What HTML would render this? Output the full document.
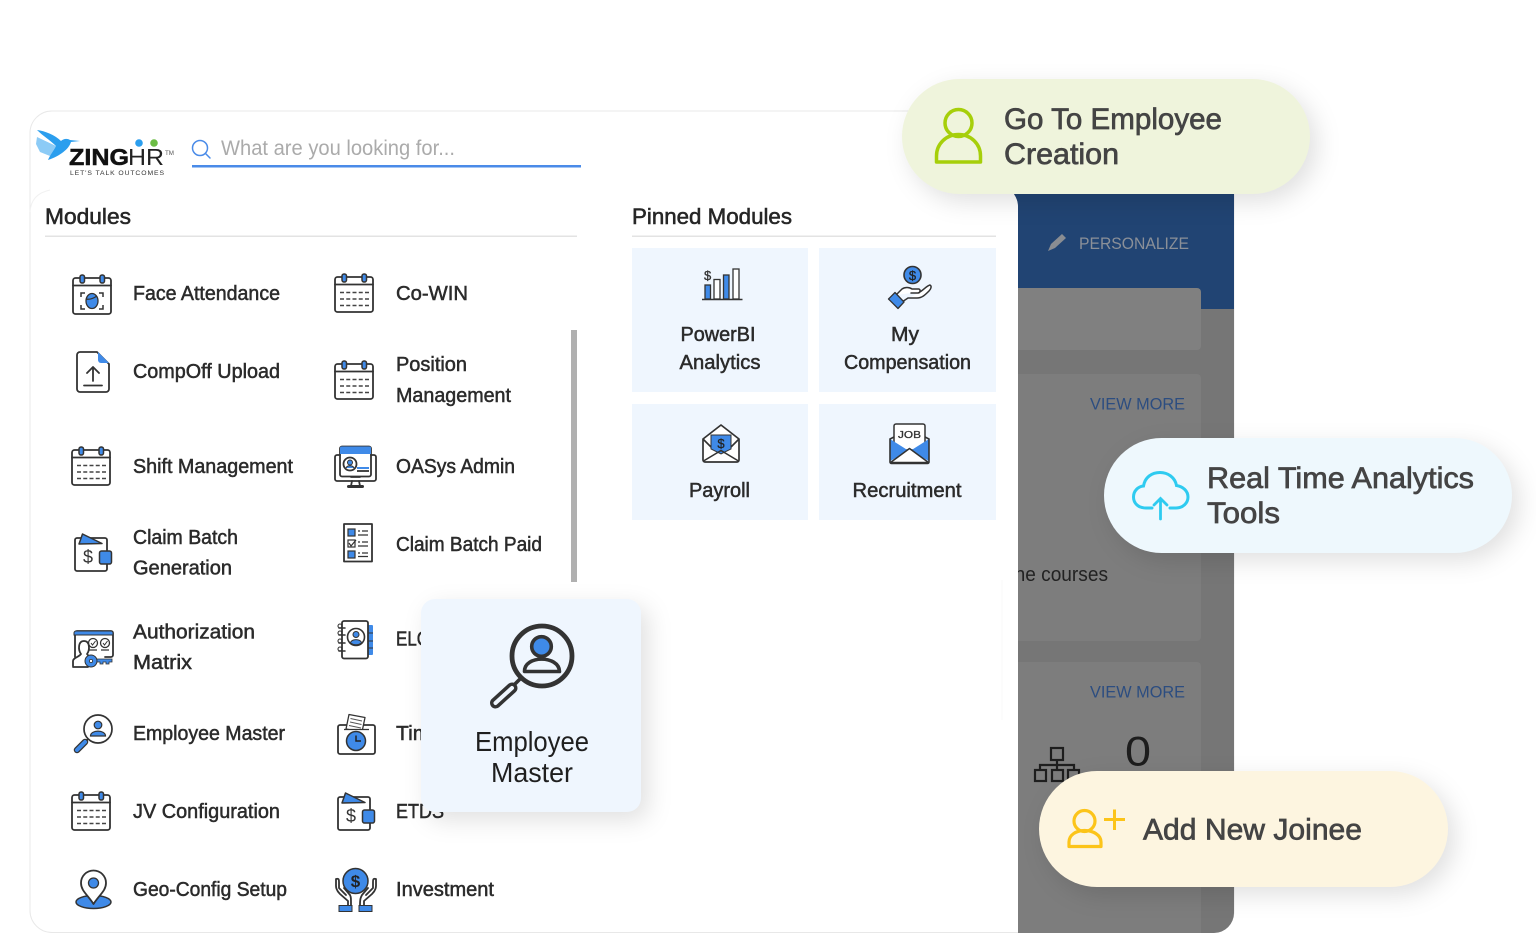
<!DOCTYPE html>
<html lang="en">
<head>
<meta charset="utf-8">
<title>ZingHR Modules</title>
<style>
html,body{margin:0;padding:0;background:#fff;width:1536px;height:933px;overflow:hidden}
svg{display:block}
text{font-family:"Liberation Sans",sans-serif}
.t{font-size:20px;fill:#2b2b2b;stroke:#2b2b2b;stroke-width:.5px}
.h{font-size:22px;fill:#262626;stroke:#262626;stroke-width:.55px}
.p{font-size:30px;fill:#444;stroke:#444;stroke-width:.7px}
.c{font-size:20px;fill:#2b2b2b;stroke:#2b2b2b;stroke-width:.5px}
.i{fill:none;stroke:#333;stroke-width:1.8;stroke-linecap:round;stroke-linejoin:round}
.b{fill:#3f8ae8}
.shadow{filter:drop-shadow(7px 8px 12px rgba(0,0,0,.12))}
</style>
</head>
<body>
<svg width="1536" height="933" viewBox="0 0 1536 933" xmlns="http://www.w3.org/2000/svg">
<defs>
<clipPath id="pn"><path d="M1014 194H1234V913a20 20 0 0 1-20 20H1018V206Q1018 200 1014 194Z"/></clipPath>
<g id="cal">
  <rect x="1" y="4" width="38" height="35" rx="2.500" class="i" fill="#fff"/>
  <path d="M1 11.500H39" class="i"/>
  <rect x="8" y="1" width="4.500" height="8" rx="2" class="b" stroke="#333" stroke-width="1.500"/>
  <rect x="28" y="1" width="4.500" height="8" rx="2" class="b" stroke="#333" stroke-width="1.500"/>
  <path d="M6 19.500H35M6 26H35M6 32.500H35" fill="none" stroke="#444" stroke-width="1.600" stroke-dasharray="4 2.250"/>
</g>
<g id="wal">
  <path d="M33 18V8a2 2 0 0 0-2-2H3a2 2 0 0 0-2 2V37a2 2 0 0 0 2 2H31a2 2 0 0 0 2-2V32" class="i"/>
  <path d="M5 12 8.500 2 28 11.500Z" class="b" stroke="#333" stroke-width="1.500" stroke-linejoin="round"/>
  <rect x="25.500" y="19" width="12" height="13" rx="2" class="b" stroke="#333" stroke-width="1.500"/>
  <text x="14" y="31" text-anchor="middle" font-size="18" fill="#333">$</text>
</g>
</defs>

<!-- outer card -->
<rect x="30" y="111" width="1204" height="821.500" rx="22" fill="#fff" stroke="#e8e8e8"/>
<path d="M30 212Q31 194 50 190" fill="none" stroke="#f1f1f1" stroke-width="1"/>

<!-- right dim panel -->
<g clip-path="url(#pn)">
  <rect x="1010" y="190" width="230" height="750" fill="#767676"/>
  <rect x="1010" y="190" width="230" height="119" fill="#214473"/>
  <rect x="1000" y="288" width="201" height="62" rx="4" fill="#808080"/>
  <rect x="1000" y="374" width="201" height="267" rx="4" fill="#7d7d7d"/>
  <rect x="1000" y="662" width="201" height="280" rx="4" fill="#7d7d7d"/>
  <path d="M1048 251l3-7 11-10 4 4-11 10Z" fill="#8a8d92"/>
  <text x="1079" y="249" font-size="17" fill="#8b9098" textLength="110" lengthAdjust="spacingAndGlyphs">PERSONALIZE</text>
  <text x="1090" y="409.500" font-size="17" fill="#2c4d80" textLength="95" lengthAdjust="spacingAndGlyphs">VIEW MORE</text>
  <text x="1090" y="697.500" font-size="17" fill="#2c4d80" textLength="95" lengthAdjust="spacingAndGlyphs">VIEW MORE</text>
  <text x="1004" y="581" font-size="20" fill="#222" textLength="104" lengthAdjust="spacingAndGlyphs">one courses</text>
  <text x="1125" y="765.500" font-size="42" fill="#1d1d1d" textLength="26" lengthAdjust="spacingAndGlyphs">0</text>
  <g fill="none" stroke="#1e1e1e" stroke-width="2.200">
    <rect x="1051" y="748" width="12" height="12"/>
    <rect x="1035" y="770" width="11" height="11"/>
    <rect x="1052" y="770" width="11" height="11"/>
    <rect x="1068" y="770" width="11" height="11"/>
    <path d="M1057 760V770M1040 770V765H1074V770"/>
  </g>
</g>

<path d="M1002 580V720" stroke="#f8f8f8" stroke-width="1"/>

<!-- logo -->
<path d="M37 137L56 146L50 156L40 152L36 144Z" fill="#8ccbf6"/>
<path d="M37 130C45 131 55 135 61 141C63 139 67 138 70 140L80 141L71 142C69 149 60 156 48 160C50 155 54 150 56 146C50 140 43 136 37 130Z" fill="#2b9eee"/>
<circle cx="139" cy="143" r="3.800" fill="#2b9eee"/>
<circle cx="154" cy="143" r="3.800" fill="#6cbd45"/>
<text x="69" y="165" font-size="23" font-weight="700" fill="#111" stroke="#111" stroke-width=".5" textLength="60" lengthAdjust="spacingAndGlyphs">ZING</text>
<text x="128" y="165" font-size="23" fill="#222" textLength="36" lengthAdjust="spacingAndGlyphs">HR</text>
<text x="165" y="155" font-size="6.500" fill="#555" textLength="9" lengthAdjust="spacingAndGlyphs">TM</text>
<text x="70" y="175" font-size="6.800" fill="#333" textLength="94" lengthAdjust="spacing">LET'S TALK OUTCOMES</text>

<!-- search -->
<circle cx="200" cy="148" r="7.500" fill="none" stroke="#4a8be8" stroke-width="1.500"/>
<path d="M205.500 153.500 210 158" stroke="#4a8be8" stroke-width="1.500" stroke-linecap="round"/>
<text x="221" y="155" font-size="21" fill="#ababab" textLength="234" lengthAdjust="spacingAndGlyphs">What are you looking for...</text>
<rect x="192" y="165" width="389" height="2.500" fill="#4a8be8"/>

<!-- headers -->
<text class="h" x="45" y="224" textLength="86" lengthAdjust="spacingAndGlyphs">Modules</text>
<rect x="45" y="235.500" width="532" height="1.500" fill="#e3e3e3"/>
<text class="h" x="632" y="224" textLength="160" lengthAdjust="spacingAndGlyphs">Pinned Modules</text>
<rect x="632" y="235.500" width="364" height="1.500" fill="#e3e3e3"/>

<!-- scrollbar -->
<rect x="571" y="330" width="6" height="252" fill="#b0b0b0"/>

<!-- left labels -->
<text class="t" x="133" y="300" textLength="147" lengthAdjust="spacingAndGlyphs">Face Attendance</text>
<text class="t" x="133" y="378" textLength="147" lengthAdjust="spacingAndGlyphs">CompOff Upload</text>
<text class="t" x="133" y="473" textLength="160" lengthAdjust="spacingAndGlyphs">Shift Management</text>
<text class="t" x="133" y="544" textLength="105" lengthAdjust="spacingAndGlyphs">Claim Batch</text>
<text class="t" x="133" y="574.500" textLength="99" lengthAdjust="spacingAndGlyphs">Generation</text>
<text class="t" x="133" y="638.500" textLength="122" lengthAdjust="spacingAndGlyphs">Authorization</text>
<text class="t" x="133" y="669" textLength="59" lengthAdjust="spacingAndGlyphs">Matrix</text>
<text class="t" x="133" y="740" textLength="152" lengthAdjust="spacingAndGlyphs">Employee Master</text>
<text class="t" x="133" y="818" textLength="147" lengthAdjust="spacingAndGlyphs">JV Configuration</text>
<text class="t" x="133" y="896" textLength="154" lengthAdjust="spacingAndGlyphs">Geo-Config Setup</text>

<!-- right labels -->
<text class="t" x="396" y="300" textLength="72" lengthAdjust="spacingAndGlyphs">Co-WIN</text>
<text class="t" x="396" y="371" textLength="71" lengthAdjust="spacingAndGlyphs">Position</text>
<text class="t" x="396" y="402" textLength="115" lengthAdjust="spacingAndGlyphs">Management</text>
<text class="t" x="396" y="473" textLength="119" lengthAdjust="spacingAndGlyphs">OASys Admin</text>
<text class="t" x="396" y="551" textLength="146" lengthAdjust="spacingAndGlyphs">Claim Batch Paid</text>
<text class="t" x="396" y="645.500" textLength="33" lengthAdjust="spacingAndGlyphs">ELC</text>
<text class="t" x="396" y="740" textLength="46" lengthAdjust="spacingAndGlyphs">Time</text>
<text class="t" x="396" y="818" textLength="48" lengthAdjust="spacingAndGlyphs">ETDS</text>
<text class="t" x="396" y="896" textLength="98" lengthAdjust="spacingAndGlyphs">Investment</text>

<!-- Face attendance -->
<g>
  <rect x="73" y="278" width="38" height="36" rx="2.500" class="i" fill="#fff"/>
  <path d="M73 285.500H111" class="i"/>
  <rect x="80" y="275" width="4.500" height="8" rx="2" class="b" stroke="#333" stroke-width="1.500"/>
  <rect x="100" y="275" width="4.500" height="8" rx="2" class="b" stroke="#333" stroke-width="1.500"/>
  <path d="M81 297V293H85M99 293H103V297M81 305V309H85M99 309H103V305" fill="none" stroke="#333" stroke-width="1.500"/>
  <ellipse cx="92" cy="301" rx="6" ry="7.500" class="b" stroke="#333" stroke-width="1.300"/>
  <path d="M86 299C90 300 94 298 97 296" fill="none" stroke="#333" stroke-width="1.300"/>
</g>

<!-- CompOff -->
<path d="M80 352H97L109 364V389a3 3 0 0 1-3 3H80a3 3 0 0 1-3-3V355a3 3 0 0 1 3-3Z" class="i" fill="#fff"/>
<path d="M98 352 109 363H101a3 3 0 0 1-3-3Z" class="b"/>
<path d="M93 381V367M87 373 93 367 99 373M84 385.500H102" class="i"/>

<!-- calendars -->
<use href="#cal" x="334" y="273"/>
<use href="#cal" x="334" y="360"/>
<use href="#cal" x="71" y="446"/>
<use href="#cal" x="71" y="791"/>

<!-- OASys -->
<g transform="translate(334 445)">
  <path d="M6 10H3a2 2 0 0 0-2 2V34a2 2 0 0 0 2 2H40a2 2 0 0 0 2-2V12a2 2 0 0 0-2-2H37" class="i"/>
  <rect x="6" y="1.500" width="31" height="30" rx="2" class="i" fill="#fff"/>
  <path d="M6 3a1.500 1.500 0 0 1 1.500-1.500H35.500A1.500 1.500 0 0 1 37 3V9H6Z" class="b"/>
  <circle cx="16" cy="19" r="6.500" class="i" fill="#fff"/>
  <circle cx="16" cy="17.500" r="2.500" fill="#3f8ae8" stroke="#333"/>
  <path d="M12 23C13 20 19 20 20 23" class="b" stroke="#333"/>
  <path d="M23 23H35" stroke="#3f8ae8" stroke-width="2"/><path d="M23 26H35" stroke="#333" stroke-width="1.800"/>
  <path d="M17 32H26M18 36 17 41M25 36 26 41" class="i"/>
  <rect x="13" y="40" width="17" height="3" rx="1.500" fill="#333"/>
</g>

<!-- wallets -->
<use href="#wal" x="74" y="532"/>
<use href="#wal" x="337" y="791"/>

<!-- checklist -->
<g transform="translate(343 523)">
  <rect x="1" y="1" width="28" height="37.500" class="i" fill="#fff" stroke-width="1.600"/>
  <rect x="5" y="6" width="7" height="7" class="b" stroke="#333" stroke-width="1.200"/>
  <rect x="5" y="17" width="7" height="7" fill="#fff" stroke="#333" stroke-width="1.200"/>
  <path d="M6 20 8 23 13 17" fill="none" stroke="#333" stroke-width="1.200"/>
  <rect x="5" y="28" width="7" height="7" class="b" stroke="#333" stroke-width="1.200"/>
  <path d="M15 8H17M19 8H25M15 12H25M15 19H17M19 19H25M15 23H25M15 30H17M19 30H25M15 33.500H25" stroke="#333" stroke-width="1.200"/>
</g>

<!-- Auth matrix -->
<g transform="translate(72 630)">
  <path d="M3 27V3a2 2 0 0 1 2-2H39a2 2 0 0 1 2 2V25a2 2 0 0 1-2 2H33" class="i"/>
  <path d="M2 5V3a2 2 0 0 1 2-2H39a2 2 0 0 1 2 2V5Z" class="b" stroke="#333" stroke-width="1"/>
  <path d="M1 36V31C1 28 7 27 9 24C6 20 6 11 12 11C18 11 18 20 15 24C16 26 18 26 19 27" class="i" stroke-width="1.400" fill="#fff"/>
  <path d="M1 37H16" class="i" stroke-width="1.400"/>
  <circle cx="21" cy="13" r="4.500" fill="none" stroke="#333" stroke-width="1.300"/>
  <circle cx="33" cy="13" r="4.500" fill="none" stroke="#333" stroke-width="1.300"/>
  <path d="M19 13 20.500 15 23.500 11M31 13 32.500 15 35.500 11" fill="none" stroke="#333" stroke-width="1"/>
  <path d="M17 20H25M29 20H37" stroke="#333" stroke-width="1.300"/>
  <circle cx="19" cy="31" r="6" class="b" stroke="#333" stroke-width="1"/>
  <circle cx="19" cy="31" r="1.600" fill="#fff" stroke="#333" stroke-width=".8"/>
  <path d="M25 29H40V32H37V34H34V32H31V34H28V32H25Z" class="b" stroke="#333" stroke-width=".8"/>
</g>

<!-- ELC notebook -->
<g transform="translate(338 620)">
  <path d="M30 5H34a1 1 0 0 1 1 1V34a1 1 0 0 1-1 1H30Z" class="b"/>
  <path d="M30 13H35M30 21H35M30 28H35" stroke="#333" stroke-width="1"/>
  <rect x="4" y="1" width="26" height="37.500" rx="2" class="i" fill="#fff" stroke-width="1.500"/>
  <path d="M1 8H7M1 15H7M1 23H7M1 31H7" stroke="#333" stroke-width="1.500" stroke-linecap="round"/>
  <circle cx="2" cy="6" r="2" fill="none" stroke="#333" stroke-width="1.100"/><circle cx="2" cy="13" r="2" fill="none" stroke="#333" stroke-width="1.100"/><circle cx="2" cy="21" r="2" fill="none" stroke="#333" stroke-width="1.100"/><circle cx="2" cy="29" r="2" fill="none" stroke="#333" stroke-width="1.100"/>
  <circle cx="18" cy="17" r="8.500" fill="none" stroke="#333" stroke-width="1.600"/>
  <circle cx="18" cy="14.500" r="3" class="b" stroke="#333" stroke-width="1"/>
  <path d="M12.500 23C13 18.500 23 18.500 23.500 23Q18 26.500 12.500 23Z" class="b" stroke="#333" stroke-width="1"/>
</g>

<!-- Employee master small -->
<g>
  <circle cx="98" cy="729" r="14" fill="#fff" stroke="#333" stroke-width="1.700"/>
  <circle cx="98" cy="725" r="3.800" class="b" stroke="#333" stroke-width="1.200"/>
  <path d="M90.500 736C90.500 729.500 105.500 729.500 105.500 736Z" class="b" stroke="#333" stroke-width="1.200"/>
  <path d="M88 739 84 743" stroke="#333" stroke-width="1.800"/>
  <path d="M85 742 77 750" stroke="#333" stroke-width="6.500" stroke-linecap="round"/>
  <path d="M85 742 77 750" stroke="#3f8ae8" stroke-width="4" stroke-linecap="round"/>
</g>

<!-- Time -->
<g transform="translate(337 713)">
  <rect x="1" y="12" width="37" height="29" rx="2" class="i" fill="#fff" stroke-width="1.500"/>
  <path d="M12 1.500 28 4.500 25 19 9 16Z" fill="#fff" stroke="#333" stroke-width="1.300" stroke-linejoin="round"/>
  <path d="M13.500 5.500 25 8M13 9 24.500 11.500M12 12.500 24 15" stroke="#555" stroke-width="1"/>
  <rect x="2" y="17" width="35" height="3" fill="#fff"/>
  <path d="M7 16.500H32" stroke="#333" stroke-width="1.300"/>
  <circle cx="19" cy="28" r="9.500" class="b" stroke="#333" stroke-width="1.500"/>
  <path d="M19 22.500V28H24" fill="none" stroke="#222" stroke-width="1.500"/>
</g>

<!-- Geo -->
<g transform="translate(76 870)">
  <ellipse cx="17.500" cy="32" rx="17.500" ry="6.500" class="b" stroke="#333" stroke-width="1.500"/>
  <path d="M17.500 34C12 25 5 21 5 13a12.500 12.500 0 0 1 25 0C30 21 23 25 17.500 34Z" fill="#fff" stroke="#333" stroke-width="1.800" stroke-linejoin="round"/>
  <circle cx="17.500" cy="13" r="5" class="b" stroke="#333" stroke-width="1.300"/>
</g>

<!-- Investment -->
<g transform="translate(334 868)">
  <circle cx="21.500" cy="13" r="12.500" class="b" stroke="#333" stroke-width="1.500"/>
  <text x="21.500" y="19" text-anchor="middle" font-size="17" font-weight="700" fill="#222">$</text>
  <path d="M14 37V33L6 26C3 23 2 21 2 18V11C5 10 5 12 5 14V20L12 27M10 20 16 27C17 29 17 30 17 37" class="i" stroke-width="1.500"/>
  <path d="M30 37V33L38 26C41 23 42 21 42 18V11C39 10 39 12 39 14V20L32 27M34 20 28 27C27 29 26 30 26 37" class="i" stroke-width="1.500"/>
  <rect x="5" y="37.500" width="13" height="6" class="b" stroke="#333" stroke-width="1"/>
  <rect x="25" y="37.500" width="13" height="6" class="b" stroke="#333" stroke-width="1"/>
</g>

<!-- pinned -->
<g fill="#eff6fe">
  <rect x="632" y="248" width="176" height="144"/>
  <rect x="819" y="248" width="177" height="144"/>
  <rect x="632" y="404" width="176" height="116"/>
  <rect x="819" y="404" width="177" height="116"/>
</g>
<text class="c" x="680.500" y="341" textLength="75" lengthAdjust="spacingAndGlyphs">PowerBI</text>
<text class="c" x="679.500" y="369" textLength="81" lengthAdjust="spacingAndGlyphs">Analytics</text>
<text class="c" x="891" y="341" textLength="28" lengthAdjust="spacingAndGlyphs">My</text>
<text class="c" x="844" y="369" textLength="127" lengthAdjust="spacingAndGlyphs">Compensation</text>
<text class="c" x="689" y="497" textLength="61" lengthAdjust="spacingAndGlyphs">Payroll</text>
<text class="c" x="852.500" y="497" textLength="109" lengthAdjust="spacingAndGlyphs">Recruitment</text>

<!-- powerBI icon -->
<g transform="translate(702 268)">
  <text x="2" y="12" font-size="13" fill="#333" stroke="#333" stroke-width=".3">$</text>
  <rect x="3" y="17" width="5.500" height="14" class="b" stroke="#333" stroke-width="1.300"/>
  <rect x="12" y="11.500" width="6" height="19.500" fill="#fff" stroke="#333" stroke-width="1.300"/>
  <rect x="21.500" y="7" width="5.500" height="24" class="b" stroke="#333" stroke-width="1.300"/>
  <rect x="31" y="1" width="6" height="30" fill="#fff" stroke="#333" stroke-width="1.300"/>
  <path d="M0 31.500H40.500" stroke="#333" stroke-width="1.600"/>
</g>
<!-- compensation icon -->
<g>
  <circle cx="912.500" cy="275" r="8.500" class="b" stroke="#333" stroke-width="1.600"/>
  <text x="912.500" y="280" text-anchor="middle" font-size="13" fill="#222" stroke="#222" stroke-width=".3">$</text>
  <path d="M896 295 902 289C905 287 909 287 912 289H919C921 290 920 293 918 293H911M918 293C923 291 926 286 930 285C932 286 931 289 929 291C925 295 922 298 917 298H908L902 302" fill="#fff" stroke="#333" stroke-width="1.500" stroke-linejoin="round" stroke-linecap="round"/>
  <path d="M888.500 299 895 292.500 904 302 898 308.500Z" class="b" stroke="#333" stroke-width="1.300" stroke-linejoin="round"/>
</g>
<!-- payroll icon -->
<g transform="translate(702 424)">
  <path d="M1 15 19 1 37 15V36a2 2 0 0 1-2 2H3a2 2 0 0 1-2-2Z" fill="#fff" stroke="#333" stroke-width="1.700" stroke-linejoin="round"/>
  <path d="M9 11H29V25L19 30 9 25Z" class="b" stroke="#333" stroke-width="1"/>
  <text x="19" y="24" text-anchor="middle" font-size="13" fill="#222" stroke="#222" stroke-width=".3">$</text>
  <path d="M1 15 9 23M37 15 29 23M1.500 37 19 26.500 36.500 37" fill="none" stroke="#333" stroke-width="1.600"/>
</g>
<!-- JOB icon -->
<g transform="translate(889 423)">
  <rect x="5" y="1" width="31" height="26" rx="2" fill="#fff" stroke="#333" stroke-width="1.500"/>
  <text x="20.500" y="15" text-anchor="middle" font-size="10.500" fill="#333" stroke="#333" stroke-width=".3" textLength="23" lengthAdjust="spacingAndGlyphs">JOB</text>
  <path d="M1 16 20 28 1 38Z" class="b"/>
  <path d="M40 16 21 28 40 38Z" class="b"/>
  <path d="M5 14 1 16V39a1.500 1.500 0 0 0 1.500 1.500H38.500A1.500 1.500 0 0 0 40 39V16L36 14" fill="none" stroke="#333" stroke-width="1.600"/>
  <path d="M1.500 39.500 20.500 25.500 39.500 39.500Z" fill="#fff" stroke="#333" stroke-width="1.500" stroke-linejoin="round"/>
</g>

<!-- Employee Master highlight -->
<g class="shadow"><rect x="421" y="599" width="220" height="213" rx="14" fill="#eff6fe"/></g>
<circle cx="542" cy="656" r="30" fill="none" stroke="#333" stroke-width="4.800"/>
<circle cx="541.500" cy="646.500" r="9.800" class="b" stroke="#333" stroke-width="3.600"/>
<path d="M524.500 671.500C524 655 559 655 559.500 671.500Z" fill="#eff6fe" stroke="#333" stroke-width="3.600" stroke-linejoin="round"/>
<path d="M521 678 513 686" stroke="#333" stroke-width="3.600"/>
<path d="M512 688 495.500 703" stroke="#333" stroke-width="11" stroke-linecap="round"/>
<path d="M512 688 495.500 703" stroke="#eff6fe" stroke-width="4" stroke-linecap="round"/>
<text x="475" y="751" font-size="28" fill="#1f1f1f" textLength="114" lengthAdjust="spacingAndGlyphs">Employee</text>
<text x="491" y="782" font-size="28" fill="#1f1f1f" textLength="82" lengthAdjust="spacingAndGlyphs">Master</text>

<!-- green pill -->
<g class="shadow"><rect x="902" y="79" width="408" height="115" rx="57.500" fill="#eff4dc"/></g>
<circle cx="958.500" cy="123" r="13.500" fill="none" stroke="#a6cf0a" stroke-width="3.500"/>
<path d="M936.500 162V156C936.500 144 946 134.500 958.500 134.500S980.500 144 980.500 156V162Z" fill="none" stroke="#a6cf0a" stroke-width="3.500" stroke-linejoin="round"/>
<text class="p" x="1004" y="129" textLength="218" lengthAdjust="spacingAndGlyphs">Go To Employee</text>
<text class="p" x="1004" y="164" textLength="115" lengthAdjust="spacingAndGlyphs">Creation</text>

<!-- blue pill -->
<g class="shadow"><rect x="1104" y="438" width="408" height="115" rx="57.500" fill="#eef8fd"/></g>
<path d="M1152 508H1146C1138 508 1133.500 503 1133.500 497C1133.500 491 1138 486.500 1143.500 486C1145 477 1152 472.500 1160 472.500C1168 472.500 1175 477.500 1176.500 485.500C1183 486.500 1188 491 1188 497C1188 503 1183 508 1176 508H1170" fill="none" stroke="#2ecbf0" stroke-width="3" stroke-linecap="round"/>
<path d="M1160.500 519V499M1154 505 1160.500 498.500 1167 505" fill="none" stroke="#2ecbf0" stroke-width="2.800" stroke-linecap="round"/>
<text class="p" x="1207" y="488" textLength="267" lengthAdjust="spacingAndGlyphs">Real Time Analytics</text>
<text class="p" x="1207" y="523" textLength="73" lengthAdjust="spacingAndGlyphs">Tools</text>

<!-- yellow pill -->
<g class="shadow"><rect x="1039" y="771" width="409" height="116" rx="58" fill="#fdf5e0"/></g>
<circle cx="1084.500" cy="821" r="10.500" fill="none" stroke="#fcc419" stroke-width="3.200"/>
<path d="M1069 846.500V842C1069 835 1076 830.500 1084.500 830.500S1101 835 1101 842V846.500Z" fill="none" stroke="#fcc419" stroke-width="3.200" stroke-linejoin="round"/>
<path d="M1104 819.500H1125M1114.500 809.500V830" stroke="#fcc419" stroke-width="3"/>
<text class="p" x="1143" y="839.500" textLength="219" lengthAdjust="spacingAndGlyphs">Add New Joinee</text>
</svg>
</body>
</html>
